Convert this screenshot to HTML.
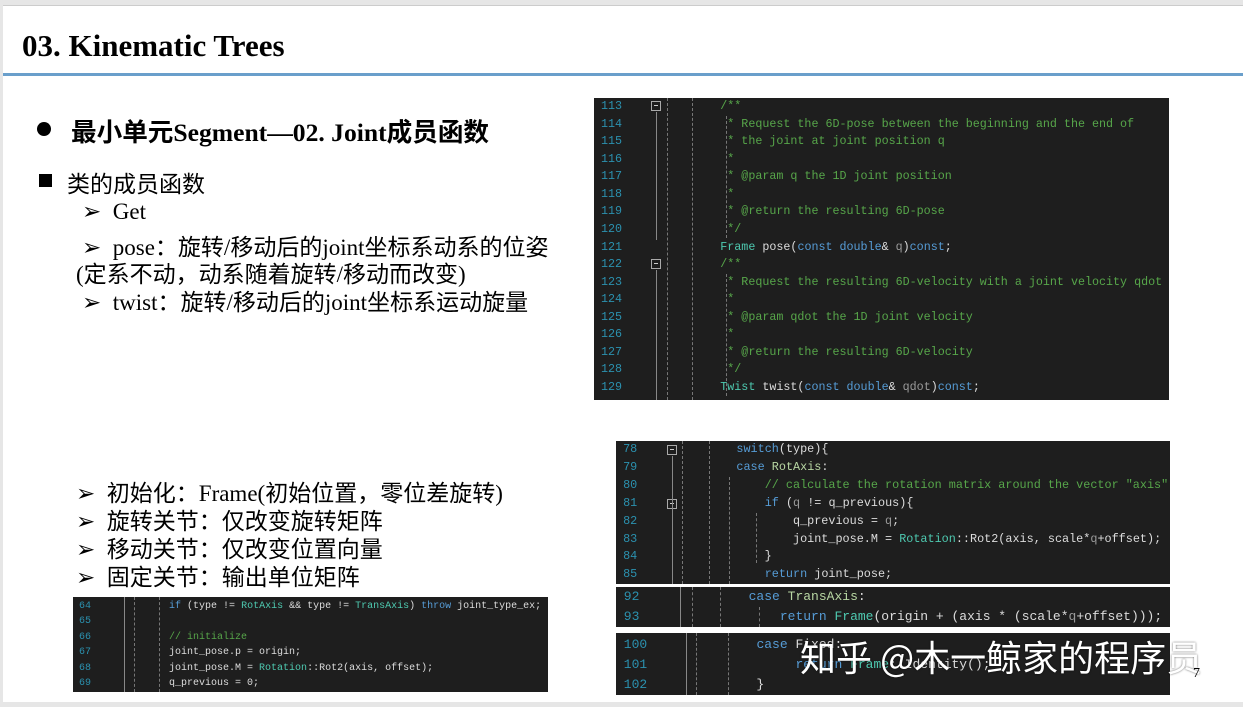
<!DOCTYPE html>
<html><head><meta charset="utf-8">
<style>
*{margin:0;padding:0;box-sizing:border-box}
body{width:1243px;height:707px;background:#e6e6e6;position:relative;overflow:hidden}
#slide{position:absolute;left:3px;top:5px;width:1240px;height:697px;background:#fff;border-top:1px solid #ccc}
.t{position:absolute;white-space:nowrap;font-family:"Liberation Serif","Noto Sans CJK SC",serif;color:#000}
.code{position:absolute;background:#1e1e1e;overflow:hidden;font-family:"Liberation Mono","Noto Sans CJK SC",monospace;color:#dcdcdc}
.l{position:absolute;white-space:pre;left:0}
.n{color:#2b91af}
.c{color:#57a64a}
.k{color:#569cd6}
.y{color:#4ec9b0}
.g{color:#9a9a9a}
.vd{position:absolute;border-left:1px dashed #777;width:0}
.vs{position:absolute;background:#888;width:1px}
.fb{position:absolute;width:10px;height:10px;border:1px solid #aaa;}
.fb:after{content:"";position:absolute;left:2px;top:3px;width:4px;height:1px;background:#ccc}
</style></head><body>
<div id="slide"></div>
<div class="t" style="left:22px;top:28px;font-size:31px;font-weight:bold">03. Kinematic Trees</div>
<div style="position:absolute;left:3px;top:73px;width:1240px;height:3px;background:#6a9fcb"></div>

<div style="position:absolute;left:37px;top:122px;width:14px;height:14px;border-radius:50%;background:#000"></div>
<div class="t" style="left:71px;top:112px;font-size:25.6px;font-weight:bold">最小单元Segment—02. Joint成员函数</div>
<div style="position:absolute;left:39px;top:174px;width:13px;height:13px;background:#000"></div>
<div class="t" style="left:67px;top:165px;font-size:23px">类的成员函数</div>
<div class="t" style="left:82px;top:199px;font-size:23px">➢&nbsp;&nbsp;Get</div>
<div class="t" style="left:82px;top:228px;font-size:23px">➢&nbsp;&nbsp;pose：旋转/移动后的joint坐标系动系的位姿</div>
<div class="t" style="left:76px;top:255px;font-size:23px">(定系不动，动系随着旋转/移动而改变)</div>
<div class="t" style="left:82px;top:283px;font-size:23px">➢&nbsp;&nbsp;twist：旋转/移动后的joint坐标系运动旋量</div>

<div class="t" style="left:76px;top:474px;font-size:23px">➢&nbsp;&nbsp;初始化：Frame(初始位置，零位差旋转)</div>
<div class="t" style="left:76px;top:502px;font-size:23px">➢&nbsp;&nbsp;旋转关节：仅改变旋转矩阵</div>
<div class="t" style="left:76px;top:530px;font-size:23px">➢&nbsp;&nbsp;移动关节：仅改变位置向量</div>
<div class="t" style="left:76px;top:558px;font-size:23px">➢&nbsp;&nbsp;固定关节：输出单位矩阵</div>

<!-- Block A -->
<div class="code" style="left:594px;top:98px;width:575px;height:302px;font-size:11.7px;line-height:17.56px">
<div class="fb" style="left:57px;top:3px"></div><div class="fb" style="left:57px;top:161px"></div>
<div class="vs" style="left:62px;top:14px;height:128px"></div><div class="vs" style="left:62px;top:172px;height:130px"></div>
<div class="vd" style="left:73px;top:0;height:302px"></div>
<div class="vd" style="left:98px;top:0;height:302px"></div>
<div class="vd" style="left:132px;top:18px;height:122px"></div>
<div class="vd" style="left:132px;top:176px;height:122px"></div>
<div class="l" style="top:0"><span class="n"> 113</span>              <span class="c">/**</span></div>
<div class="l" style="top:17.56px"><span class="n"> 114</span>              <span class="c"> * Request the 6D-pose between the beginning and the end of</span></div>
<div class="l" style="top:35.1px"><span class="n"> 115</span>              <span class="c"> * the joint at joint position q</span></div>
<div class="l" style="top:52.7px"><span class="n"> 116</span>              <span class="c"> *</span></div>
<div class="l" style="top:70.2px"><span class="n"> 117</span>              <span class="c"> * @param q the 1D joint position</span></div>
<div class="l" style="top:87.8px"><span class="n"> 118</span>              <span class="c"> *</span></div>
<div class="l" style="top:105.4px"><span class="n"> 119</span>              <span class="c"> * @return the resulting 6D-pose</span></div>
<div class="l" style="top:122.9px"><span class="n"> 120</span>              <span class="c"> */</span></div>
<div class="l" style="top:140.5px"><span class="n"> 121</span>              <span class="y">Frame</span> pose(<span class="k">const double</span>&amp; <span class="g">q</span>)<span class="k">const</span>;</div>
<div class="l" style="top:158px"><span class="n"> 122</span>              <span class="c">/**</span></div>
<div class="l" style="top:175.6px"><span class="n"> 123</span>              <span class="c"> * Request the resulting 6D-velocity with a joint velocity qdot</span></div>
<div class="l" style="top:193.2px"><span class="n"> 124</span>              <span class="c"> *</span></div>
<div class="l" style="top:210.7px"><span class="n"> 125</span>              <span class="c"> * @param qdot the 1D joint velocity</span></div>
<div class="l" style="top:228.3px"><span class="n"> 126</span>              <span class="c"> *</span></div>
<div class="l" style="top:245.8px"><span class="n"> 127</span>              <span class="c"> * @return the resulting 6D-velocity</span></div>
<div class="l" style="top:263.4px"><span class="n"> 128</span>              <span class="c"> */</span></div>
<div class="l" style="top:281px"><span class="n"> 129</span>              <span class="y">Twist</span> twist(<span class="k">const double</span>&amp; <span class="g">qdot</span>)<span class="k">const</span>;</div>
</div>

<!-- Block B -->
<div class="code" style="left:616px;top:441px;width:554px;height:143px;font-size:11.8px;line-height:17.9px">
<div class="fb" style="left:51px;top:4px"></div><div class="fb" style="left:51px;top:58px"></div>
<div class="vs" style="left:56px;top:15px;height:128px"></div>
<div class="vd" style="left:66px;top:0;height:143px"></div>
<div class="vd" style="left:93px;top:0;height:143px"></div>
<div class="vd" style="left:113px;top:36px;height:107px"></div>
<div class="vd" style="left:140px;top:72px;height:50px"></div>
<div class="l" style="top:0"><span class="n"> 78</span>              <span class="k">switch</span>(type){</div>
<div class="l" style="top:17.9px"><span class="n"> 79</span>              <span class="k">case</span> <span style="color:#b8d7a3">RotAxis</span>:</div>
<div class="l" style="top:35.8px"><span class="n"> 80</span>                  <span class="c">// calculate the rotation matrix around the vector "axis"</span></div>
<div class="l" style="top:53.7px"><span class="n"> 81</span>                  <span class="k">if</span> (<span class="g">q</span> != q_previous){</div>
<div class="l" style="top:71.6px"><span class="n"> 82</span>                      q_previous = <span class="g">q</span>;</div>
<div class="l" style="top:89.5px"><span class="n"> 83</span>                      joint_pose.M = <span class="y">Rotation</span>::Rot2(axis, scale*<span class="g">q</span>+offset);</div>
<div class="l" style="top:107.4px"><span class="n"> 84</span>                  }</div>
<div class="l" style="top:125.3px"><span class="n"> 85</span>                  <span class="k">return</span> joint_pose;</div>
</div>
<div class="code" style="left:616px;top:587px;width:554px;height:40px;font-size:13px;line-height:20px">
<div class="vs" style="left:64px;top:0;height:40px"></div>
<div class="vd" style="left:76px;top:0;height:40px"></div>
<div class="vd" style="left:104px;top:0;height:40px"></div>
<div class="vd" style="left:143px;top:20px;height:20px"></div>
<div class="l" style="top:0"><span class="n"> 92</span>              <span class="k">case</span> <span style="color:#b8d7a3">TransAxis</span>:</div>
<div class="l" style="top:20px"><span class="n"> 93</span>                  <span class="k">return</span> <span class="y">Frame</span>(origin + (axis * (scale*<span class="g">q</span>+offset)));</div>
</div>
<div class="code" style="left:616px;top:633px;width:554px;height:62px;font-size:13px;line-height:20px">
<div class="vs" style="left:70px;top:0;height:62px"></div>
<div class="vd" style="left:80px;top:0;height:62px"></div>
<div class="vd" style="left:112px;top:0;height:62px"></div>
<div class="l" style="top:2px"><span class="n"> 100</span>              <span class="k">case</span> Fixed:</div>
<div class="l" style="top:22px"><span class="n"> 101</span>                   <span class="k">return</span> <span class="y">Frame</span>::Identity();</div>
<div class="l" style="top:42px"><span class="n"> 102</span>              }</div>
</div>

<!-- Block C -->
<div class="code" style="left:73px;top:597px;width:475px;height:95px;font-size:10px;line-height:15.4px">
<div class="vs" style="left:51px;top:0;height:95px"></div>
<div class="vd" style="left:61px;top:0;height:95px"></div>
<div class="vd" style="left:86px;top:0;height:95px"></div>
<div class="l" style="top:2px"><span class="n"> 64</span>             <span class="k">if</span> (type != <span class="y">RotAxis</span> &amp;&amp; type != <span class="y">TransAxis</span>) <span class="k">throw</span> joint_type_ex;</div>
<div class="l" style="top:17.4px"><span class="n"> 65</span></div>
<div class="l" style="top:32.8px"><span class="n"> 66</span>             <span class="c">// initialize</span></div>
<div class="l" style="top:48.2px"><span class="n"> 67</span>             joint_pose.p = origin;</div>
<div class="l" style="top:63.6px"><span class="n"> 68</span>             joint_pose.M = <span class="y">Rotation</span>::Rot2(axis, offset);</div>
<div class="l" style="top:79px"><span class="n"> 69</span>             q_previous = 0;</div>
</div>

<div class="t" style="left:800px;top:630px;font-size:36px;color:#fff;font-family:'Noto Sans CJK SC',sans-serif;text-shadow:0 0 2px rgba(0,0,0,.6)">知乎 @木一鲸家的程序员</div>
<div class="t" style="left:1193px;top:666px;font-size:14px">7</div>
</body></html>
